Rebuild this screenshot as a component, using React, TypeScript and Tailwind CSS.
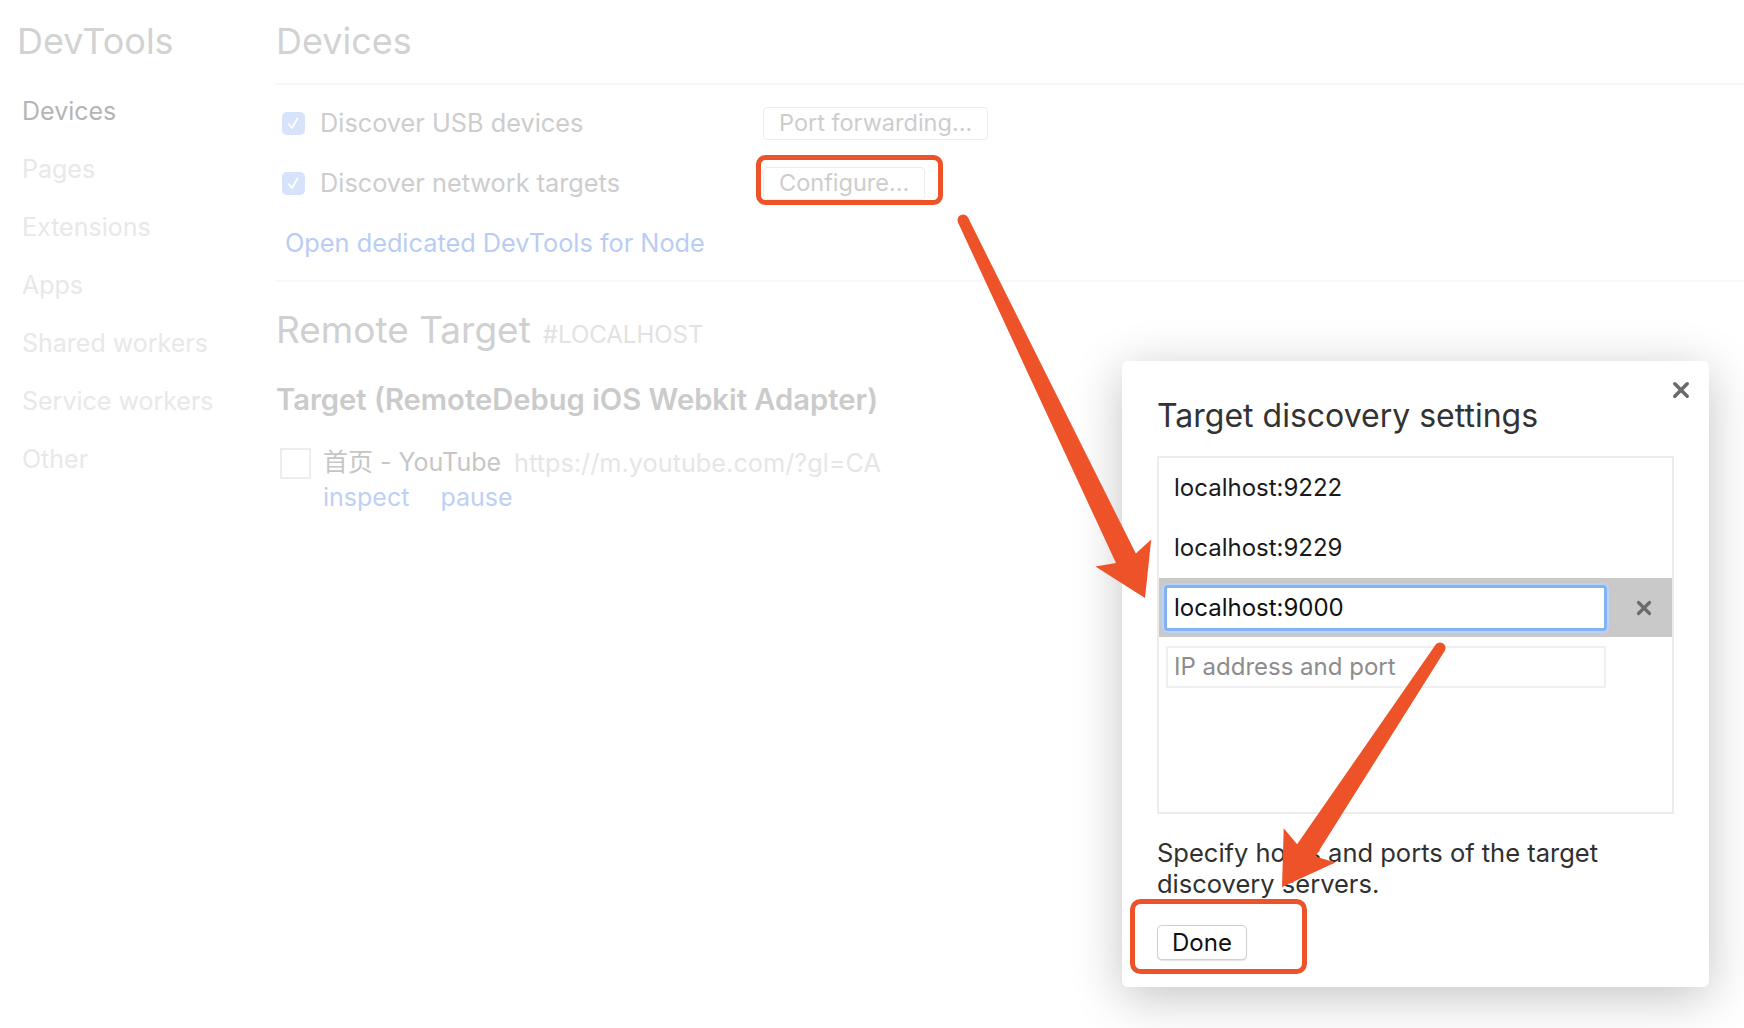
import React from 'react';

const sideItems = ['Devices', 'Pages', 'Extensions', 'Apps', 'Shared workers', 'Service workers', 'Other'];

function arrowPoints(sx: number, sy: number, tx: number, ty: number) {
    const dx = tx - sx;
    const dy = ty - sy;
    const len = Math.hypot(dx, dy);
    const ux = dx / len;
    const uy = dy / len;
    const px = -uy;
    const py = ux;
    const w0 = 5.5;
    const w1 = 11;
    const headLen = 50;
    const headHalf = 31;
    const neck = 44;
    const nx = tx - ux * neck;
    const ny = ty - uy * neck;
    const bx = tx - ux * headLen;
    const by = ty - uy * headLen;
    const pts = [
        [sx + px * w0, sy + py * w0],
        [nx + px * w1, ny + py * w1],
        [bx + px * headHalf, by + py * headHalf],
        [tx, ty],
        [bx - px * headHalf, by - py * headHalf],
        [nx - px * w1, ny - py * w1],
        [sx - px * w0, sy - py * w0],
    ];
    return pts.map((p) => p[0].toFixed(1) + ',' + p[1].toFixed(1)).join(' ');
}

function CloseIcon({ size = 16 }: { size?: number }) {
    return (
        <svg width={size} height={size} viewBox="0 0 16 16">
            <path d="M2.5 2.5 L13.5 13.5 M13.5 2.5 L2.5 13.5" stroke="#6b6b6b" strokeWidth={3.2} strokeLinecap="round" />
        </svg>
    );
}

function CheckedBox() {
    return (
        <div className="w-[23px] h-[23px] rounded-[5px] bg-[#d6e3fb] flex items-center justify-center shrink-0">
            <svg width="23" height="23" viewBox="0 0 23 23">
                <path d="M7 12.2 L10 16 L15.5 6.5" stroke="white" strokeWidth={1.8} fill="none" strokeLinecap="round" strokeLinejoin="round" />
            </svg>
        </div>
    );
}

function Annotations() {
    return (
        <svg className="absolute inset-0 pointer-events-none" width="1744" height="1028" viewBox="0 0 1744 1028">
            <rect x="758.5" y="157.5" width="182" height="45" rx="7" fill="none" stroke="#ee5228" strokeWidth={5} />
            <rect x="1132.5" y="901.5" width="172" height="70" rx="8" fill="none" stroke="#ee5228" strokeWidth={5} />
            <polygon points={arrowPoints(963, 220, 1145, 598)} fill="#ee5228" />
            <circle cx="963" cy="220" r="5.5" fill="#ee5228" />
            <polygon points={arrowPoints(1440, 648, 1282, 887)} fill="#ee5228" />
            <circle cx="1440" cy="648" r="5.5" fill="#ee5228" />
        </svg>
    );
}

function DiscoveryModal() {
    return (
        <div className="absolute left-[1122px] top-[361px] w-[587px] h-[626px] bg-white rounded-[6px] shadow-[0_10px_50px_rgba(0,0,0,0.24)] px-[35px] pt-[35px]">
            <button className="absolute right-[19px] top-[20px] w-[18px] h-[18px] flex items-center justify-center">
                <CloseIcon size={18} />
            </button>
            <h2 className="text-[32px] leading-[40px] text-[#333333]">Target discovery settings</h2>
            <div className="mt-[20px] h-[358px] border-2 border-[#ececec]">
                <div className="h-[60px] pl-[15px] flex items-center text-[24px] text-[#1a1a1a]">localhost:9222</div>
                <div className="h-[60px] pl-[15px] flex items-center text-[24px] text-[#1a1a1a]">localhost:9229</div>
                <div className="h-[59px] bg-[#c9c9c9] flex items-center">
                    <div className="ml-[5px] w-[443px] h-[46px] bg-white border-[3px] border-[#86b0f0] rounded-[4px] shadow-[0_0_0_2px_#b9d3f8] pl-[7px] flex items-center text-[24px] text-[#111111]">
                        localhost:9000
                    </div>
                    <div className="ml-[29px]">
                        <CloseIcon size={16} />
                    </div>
                </div>
                <div className="h-[60px] flex items-center">
                    <div className="ml-[7px] w-[440px] h-[42px] border-2 border-[#efefef] pl-[6px] flex items-center text-[24px] text-[#8c8c8c]">
                        IP address and port
                    </div>
                </div>
            </div>
            <p className="mt-[23px] text-[25.5px] leading-[31px] text-[#303030]">
                Specify hosts and ports of the target discovery servers.
            </p>
            <button className="mt-[26px] h-[35px] px-[14px] border border-[#cfcfcf] rounded-[5px] bg-white shadow-[0_1px_1px_rgba(0,0,0,0.12)] text-[24px] leading-none text-[#111111]">
                Done
            </button>
        </div>
    );
}

export default function App() {
    return (
        <div className="relative w-[1744px] h-[1028px] overflow-hidden bg-white font-['Inter','Noto_Sans_CJK_SC',sans-serif]">
            <div className="flex h-full">
                <aside className="w-[276px] shrink-0 pl-[17px] pt-[19px]">
                    <div className="text-[36px] leading-[44px] text-[#d2d2d2]">DevTools</div>
                    <nav className="mt-[19px] pl-[5px] flex flex-col">
                        {sideItems.map((item, i) => (
                            <div
                                key={item}
                                className={
                                    i === 0
                                        ? 'h-[58px] leading-[58px] text-[25px] text-[#b5b5b5]'
                                        : 'h-[58px] leading-[58px] text-[25px] text-[#e8e8e8]'
                                }
                            >
                                {item}
                            </div>
                        ))}
                    </nav>
                </aside>

                <main className="flex-1 pt-[19px]">
                    <h1 className="text-[36px] leading-[44px] text-[#d2d2d2]">Devices</h1>
                    <div className="mt-[20px] h-[2px] bg-[#f7f7f7]" />

                    <div className="pt-[8px]">
                        <div className="h-[60px] grid grid-cols-[487px_auto] items-center">
                            <div className="flex items-center pl-[6px]">
                                <CheckedBox />
                                <span className="ml-[15px] text-[25.3px] text-[#cdcdcd]">Discover USB devices</span>
                            </div>
                            <div>
                                <button className="h-[33px] px-[15px] border border-[#ececec] rounded-[4px] text-[23.5px] leading-none text-[#cdcdcd]">
                                    Port forwarding...
                                </button>
                            </div>
                        </div>
                        <div className="h-[60px] grid grid-cols-[487px_auto] items-center">
                            <div className="flex items-center pl-[6px]">
                                <CheckedBox />
                                <span className="ml-[15px] text-[25.3px] text-[#cdcdcd]">Discover network targets</span>
                            </div>
                            <div>
                                <button className="h-[33px] px-[15px] border border-[#ececec] rounded-[4px] text-[23.5px] leading-none text-[#cdcdcd]">
                                    Configure...
                                </button>
                            </div>
                        </div>
                        <div className="h-[60px] flex items-center pl-[9px] text-[25.3px] text-[#b9cdf3]">
                            Open dedicated DevTools for Node
                        </div>
                    </div>
                    <div className="mt-[7px] h-[2px] bg-[#f7f7f7]" />

                    <div className="mt-[26px] flex items-baseline">
                        <span className="text-[37px] leading-[44px] text-[#d0d0d0]">Remote Target</span>
                        <span className="ml-[12px] text-[24px] text-[#e2e2e2]">#LOCALHOST</span>
                    </div>

                    <div className="mt-[30px] text-[29.2px] leading-[34px] font-semibold text-[#cbcbcb]">
                        Target (RemoteDebug iOS Webkit Adapter)
                    </div>

                    <div className="mt-[30px] h-[32px] flex items-center">
                        <div className="ml-[4px] w-[31px] h-[31px] border-2 border-[#ededed] shrink-0" />
                        <span className="ml-[12px] text-[25px] text-[#c6c6c6]">首页 - YouTube</span>
                        <span className="ml-[13px] text-[25.3px] text-[#e6e6e6]">https://m.youtube.com/?gl=CA</span>
                    </div>
                    <div className="mt-[3px] h-[32px] pl-[47px] flex items-center text-[25px] text-[#bdd0f5]">
                        <span>inspect</span>
                        <span className="ml-[31px]">pause</span>
                    </div>
                </main>
            </div>

            <DiscoveryModal />
            <Annotations />
        </div>
    );
}
